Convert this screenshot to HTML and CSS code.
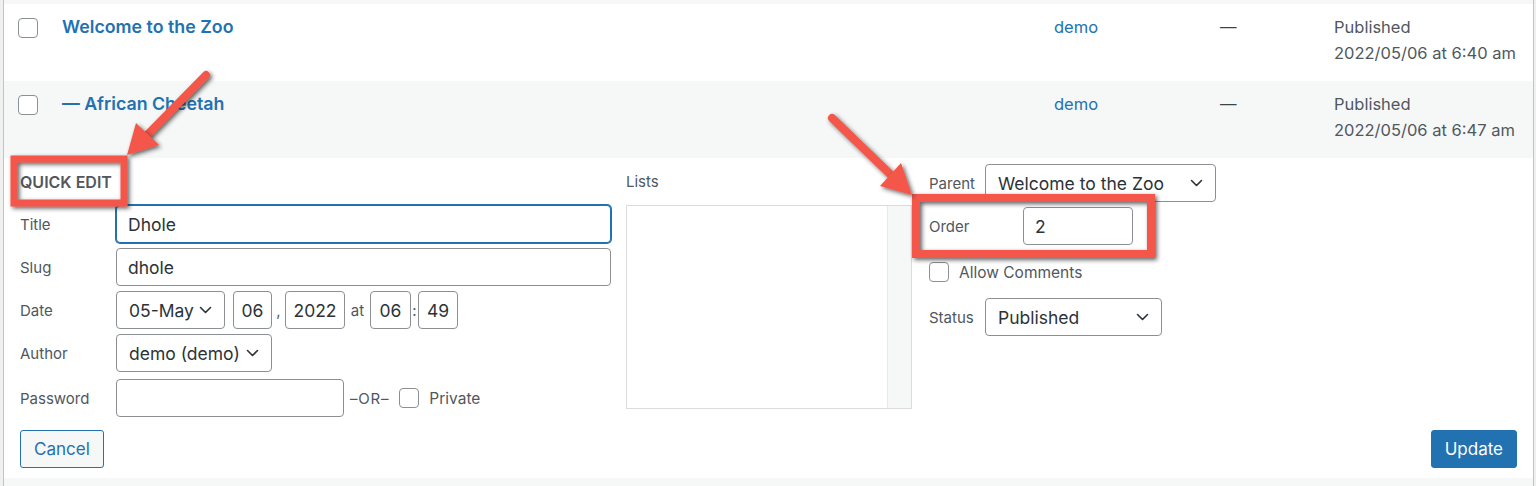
FILE: index.html
```html
<!DOCTYPE html>
<html lang="en">
<head>
    <meta charset="UTF-8">
    <meta name="viewport" content="width=device-width, initial-scale=1.0">
    <title>Pages - Quick Edit</title>
    <link rel="stylesheet" href="styles.css">
</head>
<body>
    <div class="table">
        <div class="row-top"></div>

        <div class="row">
            <div class="cell-check"><span class="checkbox"></span></div>
            <div class="cell-title"><a href="#">Welcome to the Zoo</a></div>
            <div class="cell-author"><a href="#">demo</a></div>
            <div class="cell-comments">—</div>
            <div class="cell-date">Published<br>2022/05/06 at 6:40 am</div>
        </div>

        <div class="row alt">
            <div class="cell-check"><span class="checkbox"></span></div>
            <div class="cell-title"><a href="#">— African Cheetah</a></div>
            <div class="cell-author"><a href="#">demo</a></div>
            <div class="cell-comments">—</div>
            <div class="cell-date">Published<br>2022/05/06 at 6:47 am</div>
        </div>

        <div class="quick-edit">
            <div class="qe-cols">
                <div class="qe-left">
                    <div class="qe-heading">QUICK EDIT</div>

                    <div class="field">
                        <label>Title</label>
                        <input type="text" class="text-input focus" value="Dhole">
                    </div>
                    <div class="field">
                        <label>Slug</label>
                        <input type="text" class="text-input" value="dhole">
                    </div>
                    <div class="field">
                        <label>Date</label>
                        <div class="select month">05-May <svg class="chevron" width="13" height="8" viewBox="0 0 13 8"><path d="M1.5 1.5 L6.5 6.5 L11.5 1.5"/></svg></div>
                        <input type="text" class="text-input small day" value="06">
                        <span class="sep sep-comma">,</span>
                        <input type="text" class="text-input small year" value="2022">
                        <span class="sep sep-at">at</span>
                        <input type="text" class="text-input small hour" value="06">
                        <span class="sep sep-colon">:</span>
                        <input type="text" class="text-input small minute" value="49">
                    </div>
                    <div class="field">
                        <label>Author</label>
                        <div class="select author">demo (demo) <svg class="chevron" width="13" height="8" viewBox="0 0 13 8"><path d="M1.5 1.5 L6.5 6.5 L11.5 1.5"/></svg></div>
                    </div>
                    <div class="field field-password">
                        <label>Password</label>
                        <input type="text" class="text-input password" value="">
                        <span class="or">–OR–</span>
                        <span class="checkbox"></span>
                        <span class="check-label">Private</span>
                    </div>
                </div>

                <div class="qe-middle">
                    <div class="lists-label">Lists</div>
                    <div class="lists-box"><div class="scroll-track"></div></div>
                </div>

                <div class="qe-right">
                    <div class="r-field">
                        <label class="r-label">Parent</label>
                        <div class="select parent">Welcome to the Zoo <svg class="chevron" width="13" height="8" viewBox="0 0 13 8"><path d="M1.5 1.5 L6.5 6.5 L11.5 1.5"/></svg></div>
                    </div>
                    <div class="r-field order-field">
                        <label class="r-label order-label">Order</label>
                        <input type="text" class="text-input order" value="2">
                    </div>
                    <div class="r-check">
                        <span class="checkbox"></span>
                        <span class="check-label">Allow Comments</span>
                    </div>
                    <div class="r-field status-field">
                        <label class="r-label">Status</label>
                        <div class="select status">Published <svg class="chevron" width="13" height="8" viewBox="0 0 13 8"><path d="M1.5 1.5 L6.5 6.5 L11.5 1.5"/></svg></div>
                    </div>
                </div>
            </div>

            <div class="qe-actions">
                <button class="btn">Cancel</button>
                <button class="btn btn-primary">Update</button>
            </div>
        </div>

        <div class="row-bottom"></div>
    </div>

    <!-- screenshot annotations -->
    <svg class="annotations" width="1536" height="486" viewBox="0 0 1536 486">
        <defs>
            <filter id="shade" x="-20%" y="-20%" width="140%" height="140%">
                <feDropShadow dx="2" dy="2" stdDeviation="2" flood-color="#222" flood-opacity="0.7"/>
            </filter>
        </defs>
        <g filter="url(#shade)" fill="none" stroke="#f4574a">
            <rect x="14" y="159" width="110" height="44" stroke-width="7"/>
            <rect x="916" y="198" width="235" height="56" stroke-width="8"/>
            <line x1="206" y1="75" x2="148" y2="134" stroke-width="8" stroke-linecap="round"/>
            <line x1="832" y1="118" x2="890" y2="174" stroke-width="8" stroke-linecap="round"/>
        </g>
        <g fill="#f4574a" filter="url(#shade)">
            <polygon points="127,155 136,123 159,145"/>
            <polygon points="912,195 880,186 901,163"/>
        </g>
    </svg>
</body>
</html>
```

FILE: styles.css
```css
* {
    margin: 0;
    padding: 0;
    box-sizing: border-box;
    font-family: Inter, 'Noto Sans', sans-serif;
}

body {
    background-color: #f0f0f1;
    color: #3c434a;
    width: 1536px;
    height: 486px;
    overflow: hidden;
    position: relative;
}

.table {
    margin: 0 2px 0 3px;
    border-left: 1px solid #c3c4c7;
    border-right: 1px solid #c3c4c7;
    background-color: #fff;
}

.row-top {
    height: 4px;
    background-color: #f6f7f7;
}

.row-bottom {
    height: 8px;
    background-color: #f6f7f7;
}

.row {
    display: flex;
    height: 77px;
    padding-top: 10px;
    font-size: 16.5px;
    line-height: 26px;
}

.row.alt {
    background-color: #f6f7f7;
}

.cell-check {
    width: 58px;
    padding-left: 14px;
    padding-top: 4px;
}

.cell-title {
    width: 992px;
}

.cell-title a {
    color: #2271b1;
    font-weight: 600;
    font-size: 17.8px;
    text-decoration: none;
}

.cell-author {
    width: 166px;
}

.cell-author a {
    color: #2271b1;
    text-decoration: none;
}

.cell-comments {
    width: 114px;
    color: #3c434a;
}

.cell-date {
    flex: 1;
    color: #50575e;
}

.checkbox {
    display: inline-block;
    width: 20px;
    height: 20px;
    border: 1px solid #8c8f94;
    border-radius: 4px;
    background-color: #fff;
    flex-shrink: 0;
}

/* quick edit panel */

.quick-edit {
    padding: 6px 16px 10px 16px;
    font-size: 15px;
    color: #50575e;
}

.qe-cols {
    display: flex;
}

.qe-left {
    width: 591px;
    margin-right: 15px;
}

.qe-middle {
    width: 286px;
    margin-right: 17px;
}

.qe-right {
    flex: 1;
}

.qe-heading {
    height: 41px;
    line-height: 36px;
    font-weight: 600;
    font-size: 16px;
    color: #50575e;
}

.field {
    display: flex;
    align-items: center;
    height: 38px;
    margin-bottom: 5px;
}

.field label {
    width: 96px;
    flex-shrink: 0;
}

.field-password {
    margin-top: 7px;
    margin-bottom: 0;
}

.text-input {
    height: 38px;
    border: 1px solid #8c8f94;
    border-radius: 4px;
    padding: 0 11px;
    font-size: 17.5px;
    color: #2c3338;
    background-color: #fff;
    flex: 1;
    min-width: 0;
    outline: none;
}

.text-input.focus {
    border-color: #2271b1;
    box-shadow: 0 0 0 1px #2271b1;
}

.text-input.small {
    flex: none;
    padding: 0;
    text-align: center;
}

.day { width: 39px; }
.year { width: 60px; }
.hour { width: 41px; }
.minute { width: 40px; }

.sep {
    text-align: center;
    font-size: 15px;
    color: #50575e;
}

.sep-comma { width: 13px; }
.sep-at { width: 25px; }
.sep-colon { width: 7px; }

.select {
    height: 38px;
    border: 1px solid #8c8f94;
    border-radius: 4px;
    padding: 0 12px;
    font-size: 17.5px;
    color: #2c3338;
    background-color: #fff;
    display: flex;
    align-items: center;
    justify-content: space-between;
    flex-shrink: 0;
}

.chevron path {
    fill: none;
    stroke: #2c3338;
    stroke-width: 1.6;
    stroke-linecap: round;
    stroke-linejoin: round;
}

.month {
    width: 109px;
    margin-right: 8px;
}

.author { width: 156px; }

.password {
    flex: none;
    width: 228px;
}

.or {
    margin: 0 10px 0 6px;
    font-size: 15px;
    letter-spacing: 0.8px;
}

.check-label {
    margin-left: 10px;
    font-size: 15.5px;
    color: #50575e;
}

.lists-label {
    height: 41px;
    line-height: 36px;
}

.lists-box {
    height: 204px;
    border: 1px solid #dcdcde;
    display: flex;
    justify-content: flex-end;
}

.scroll-track {
    width: 24px;
    background-color: #f6f7f7;
    border-left: 1px solid #e8e8e8;
}

.r-field {
    display: flex;
    align-items: center;
    height: 38px;
}

.r-label {
    width: 56px;
    flex-shrink: 0;
}

.order-label {
    width: 94px;
}

.parent { width: 231px; }

.order-field {
    margin-top: 5px;
}

.order {
    flex: none;
    width: 110px;
}

.r-check {
    display: flex;
    align-items: center;
    height: 30px;
    margin-top: 12px;
}

.status-field {
    margin-top: 11px;
}

.status { width: 177px; }

.qe-actions {
    display: flex;
    justify-content: space-between;
    margin-top: 13px;
}

.btn {
    height: 38px;
    padding: 0 13px;
    font-size: 17px;
    border: 1px solid #2271b1;
    border-radius: 3px;
    color: #2271b1;
    background-color: #f6f7f7;
    cursor: pointer;
}

.btn-primary {
    background-color: #2271b1;
    color: #fff;
}

.annotations {
    position: absolute;
    top: 0;
    left: 0;
    pointer-events: none;
}
```
